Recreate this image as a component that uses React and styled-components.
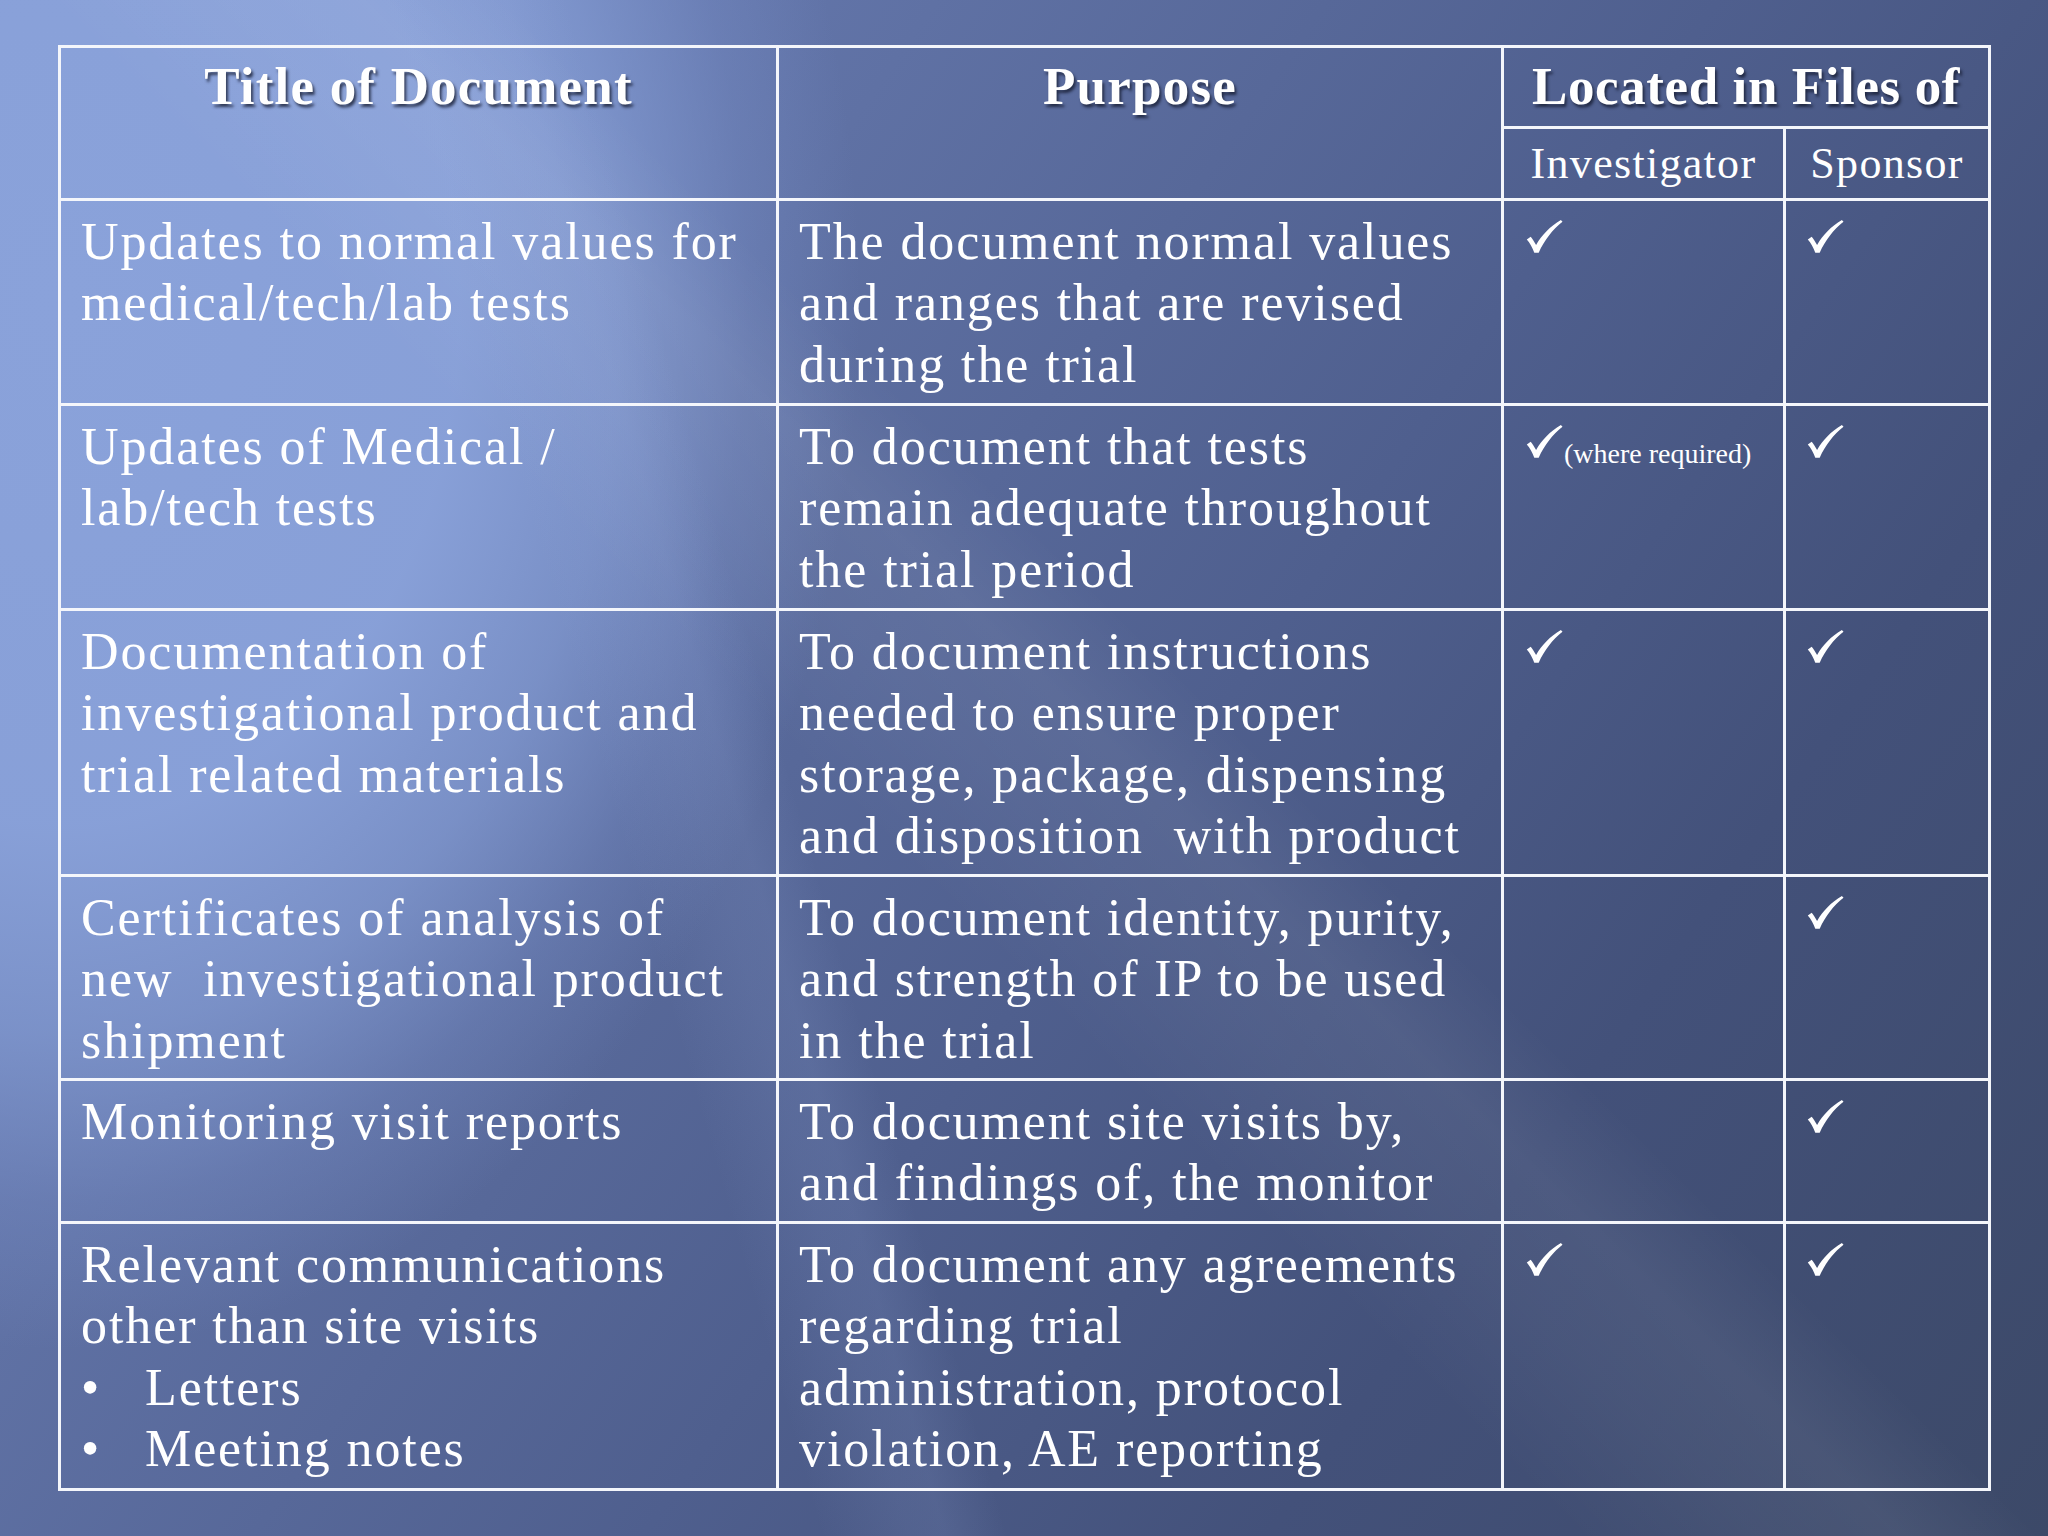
import React from "react";
import styled, { createGlobalStyle } from "styled-components";

const Global = createGlobalStyle`
  html, body { margin: 0; padding: 0; }
  body {
    width: 2048px;
    height: 1536px;
    overflow: hidden;
    font-family: "Liberation Serif", "Times New Roman", serif;
    color: #ffffff;
  }
`;

const Slide = styled.div`
  width: 2048px;
  height: 1536px;
  box-sizing: border-box;
  padding: 45px 0 0 58px;
  background:
    linear-gradient(74deg, rgba(160,180,230,0) 0%, rgba(160,180,230,0) 33%, rgba(160,180,230,0.10) 36.5%, rgba(160,180,230,0.12) 38%, rgba(160,180,230,0) 40.5%, rgba(160,180,230,0) 100%),
    linear-gradient(45deg, rgba(255,255,255,0) 0%, rgba(255,255,255,0) 44%, rgba(255,255,255,0.04) 49%, rgba(255,255,255,0.06) 53%, rgba(255,255,255,0) 57%, rgba(255,255,255,0) 100%),
    radial-gradient(ellipse 800px 1050px at 60px 300px, rgba(138,162,218,1) 0%, rgba(137,161,217,0.97) 50%, rgba(132,156,212,0.72) 70%, rgba(125,148,206,0.3) 86%, rgba(125,148,206,0) 100%),
    linear-gradient(125deg, #6f84bf 0%, #5f71a4 30%, #4f5f8e 55%, #43517a 75%, #3c4968 100%);
`;

const Table = styled.table`
  border-collapse: collapse;
  table-layout: fixed;
  width: 1930px;
`;

const Row = styled.tr`
  height: ${p => p.$h}px;
`;

const baseCell = `
  border: 3px solid #f4f6fb;
  vertical-align: top;
  box-sizing: border-box;
  white-space: pre;
  overflow: visible;
`;

const HeadCell = styled.th`
  ${baseCell}
  padding: 8px 0 0 0;
  text-align: center;
  font-weight: 700;
  font-size: 53px;
  line-height: 61px;
  letter-spacing: ${p => (p.$tight ? 0.6 : 1.2)}px;
  text-shadow: 2px 3px 3px rgba(20, 25, 45, 0.75);
`;

const SubHeadCell = styled.th`
  ${baseCell}
  padding: 8px 0 0 0;
  text-align: center;
  font-weight: 400;
  font-size: 44px;
  line-height: 53px;
  letter-spacing: 1.3px;
`;

const Cell = styled.td`
  ${baseCell}
  padding: 10px 0 0 20px;
  font-size: 52px;
  line-height: 61.4px;
  letter-spacing: 1.9px;
`;

const CheckCell = styled.td`
  ${baseCell}
  padding: 19px 0 0 ${p => p.$pl}px;
`;

const Line = styled.div``;

const BulletLine = styled.div`
  display: flex;
`;

const Bullet = styled.span`
  width: 64px;
  flex: none;
`;

const CheckRow = styled.div`
  display: flex;
  align-items: flex-start;
`;

const Note = styled.span`
  font-size: 28px;
  line-height: 28px;
  margin-top: 15px;
  margin-left: 1px;
`;

const Check = () => (
  <svg width="37" height="33" viewBox="0 0 36 33" style={{ display: "block", flex: "none" }}>
    <path
      d="M0.3 19.6 L4.2 16.8 C6 19 7.8 22 9.6 25 C15.2 15.2 23.6 6.2 34.4 0 L36 1.8 C26.2 9.4 17.8 20.2 12.2 32.8 L7.8 32.8 C5.9 27.4 3.4 23.3 0.3 19.6 Z"
      fill="#ffffff"
    />
  </svg>
);

const rows = [
  {
    h: 205,
    title: ["Updates to normal values for", "medical/tech/lab tests"],
    purpose: ["The document normal values", "and ranges that are revised", "during the trial"],
    inv: true,
    sp: true,
  },
  {
    h: 205,
    title: ["Updates of Medical /", "lab/tech tests"],
    purpose: ["To document that tests", "remain adequate throughout", "the trial period"],
    inv: true,
    note: "(where required)",
    sp: true,
  },
  {
    h: 266,
    title: ["Documentation of", "investigational product and", "trial related materials"],
    purpose: ["To document instructions", "needed to ensure proper", "storage, package, dispensing", "and disposition  with product"],
    inv: true,
    sp: true,
  },
  {
    h: 204,
    title: ["Certificates of analysis of", "new  investigational product", "shipment"],
    purpose: ["To document identity, purity,", "and strength of IP to be used", "in the trial"],
    inv: false,
    sp: true,
  },
  {
    h: 143,
    title: ["Monitoring visit reports"],
    purpose: ["To document site visits by,", "and findings of, the monitor"],
    inv: false,
    sp: true,
  },
  {
    h: 267,
    title: ["Relevant communications", "other than site visits"],
    bullets: ["Letters", "Meeting notes"],
    purpose: ["To document any agreements", "regarding trial", "administration, protocol", "violation, AE reporting"],
    inv: true,
    sp: true,
  },
];

export default function App() {
  return (
    <>
      <Global />
      <Slide>
        <Table>
          <colgroup>
            <col style={{ width: 718 }} />
            <col style={{ width: 725 }} />
            <col style={{ width: 282 }} />
            <col style={{ width: 205 }} />
          </colgroup>
          <thead>
            <Row $h={81}>
              <HeadCell rowSpan={2}>Title of Document</HeadCell>
              <HeadCell rowSpan={2}>Purpose</HeadCell>
              <HeadCell colSpan={2} $tight>Located in Files of</HeadCell>
            </Row>
            <Row $h={72}>
              <SubHeadCell>Investigator</SubHeadCell>
              <SubHeadCell>Sponsor</SubHeadCell>
            </Row>
          </thead>
          <tbody>
            {rows.map((r, i) => (
              <Row key={i} $h={r.h}>
                <Cell>
                  {r.title.map((t, j) => (
                    <Line key={j}>{t}</Line>
                  ))}
                  {r.bullets &&
                    r.bullets.map((b, j) => (
                      <BulletLine key={"b" + j}>
                        <Bullet>•</Bullet>
                        <span>{b}</span>
                      </BulletLine>
                    ))}
                </Cell>
                <Cell>
                  {r.purpose.map((t, j) => (
                    <Line key={j}>{t}</Line>
                  ))}
                </Cell>
                <CheckCell $pl={22}>
                  {r.inv && (
                    <CheckRow>
                      <Check />
                      {r.note && <Note>{r.note}</Note>}
                    </CheckRow>
                  )}
                </CheckCell>
                <CheckCell $pl={21}>{r.sp && <Check />}</CheckCell>
              </Row>
            ))}
          </tbody>
        </Table>
      </Slide>
    </>
  );
}
